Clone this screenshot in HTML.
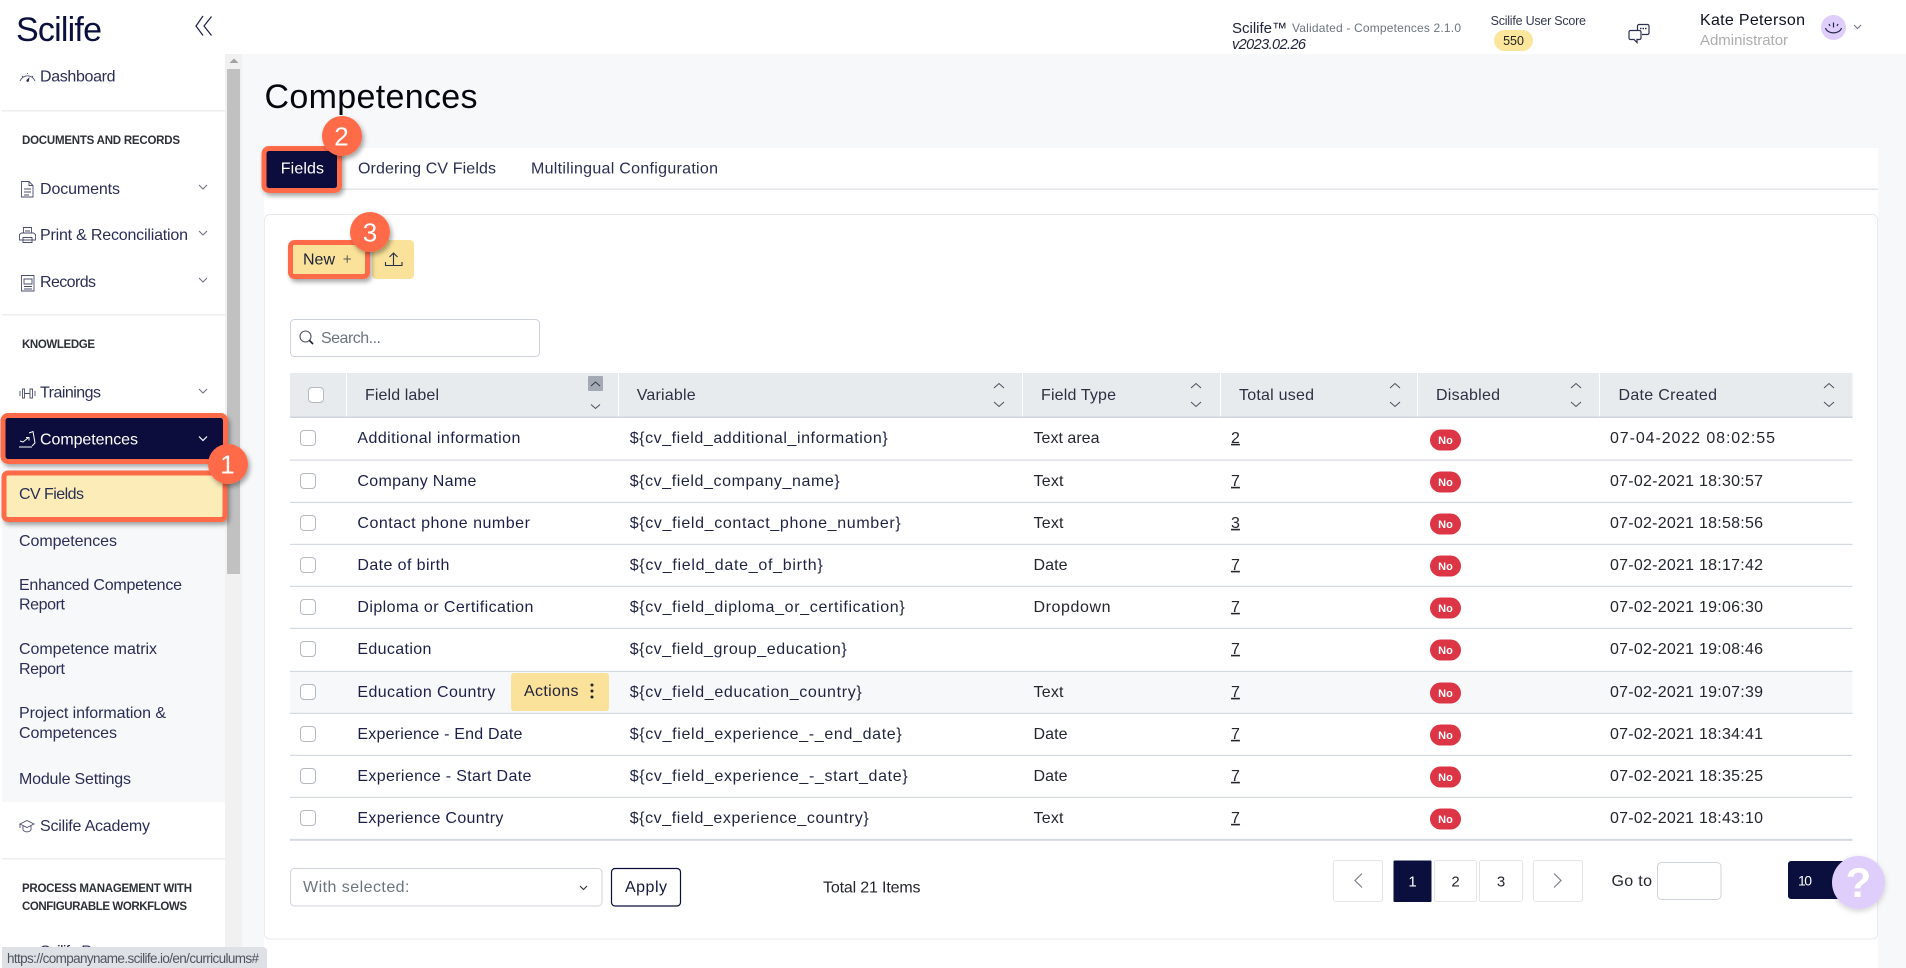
<!DOCTYPE html>
<html lang="en">
<head>
<meta charset="utf-8">
<title>Competences</title>
<style>
html,body{margin:0;padding:0;background:#fff;width:1906px;height:968px;overflow:hidden}
svg{display:block}
text{font-family:"Liberation Sans",sans-serif;fill:#20244c;font-size:16px;white-space:pre}
.s{fill:#2a2e55;transform:translateY(-.5px)}
.h{font-weight:bold;font-size:11.5px;fill:#2d3036;transform:translateY(-.5px)}
.t{font-size:16px;fill:#1c2048;transform:translateY(-.7px)}
.v{font-size:16px;fill:#1f2340;transform:translateY(-.7px)}
.d{font-size:16px;fill:#24262e;transform:translateY(-.7px)}
.u{font-size:16px;fill:#24262e;text-decoration:underline;transform:translateY(-.7px)}
.th{font-size:16px;fill:#2c3040;transform:translateY(-.5px)}
.no{font-size:11px;font-weight:bold;fill:#fff;text-anchor:middle}
.b{font-size:26px;fill:#fff;text-anchor:middle}
.sort{fill:none;stroke:#4b4f5c;stroke-width:1}
.ic{fill:none;stroke:#4a4e6e;stroke-width:.9}
.chev{fill:none;stroke:#6a6e80;stroke-width:1}
.cb{fill:#fff;stroke:#b4b9c1;stroke-width:1}
</style>
</head>
<body>
<svg width="1906" height="968" viewBox="0 0 1906 968" xmlns="http://www.w3.org/2000/svg">
<defs>
<filter id="sh" x="-30%" y="-30%" width="170%" height="170%"><feDropShadow dx="2" dy="3" stdDeviation="2.5" flood-color="#000" flood-opacity=".35"/></filter>
<filter id="sh2" x="-30%" y="-30%" width="170%" height="170%"><feDropShadow dx="0" dy="2" stdDeviation="3" flood-color="#000" flood-opacity=".18"/></filter>
</defs>

<!-- base -->
<rect width="1906" height="968" fill="#fff"/>
<rect x="242" y="54" width="1664" height="914" fill="#f7f8fa"/>
<rect x="264" y="148" width="1614" height="820" fill="#fff"/>

<!-- sidebar -->
<rect x="2" y="470" width="223" height="332" fill="#f7f8fa"/>
<rect x="225" y="54" width="17" height="914" fill="#f1f1f1"/>
<rect x="227" y="69" width="13" height="505" fill="#c1c1c1"/>
<path d="M229.500 63h9l-4.500-4.500z" fill="#a3a3a3"/>

<text x="16" y="41" style="font-size:34px;fill:#0a0f3e" textLength="86">Scilife</text>
<path d="M203 16l-7 10 7 9.500M211.500 16.500l-7.500 9.500 7.500 9.500" fill="none" stroke="#1a1e48" stroke-width="1.200"/>

<rect x="2" y="110" width="223" height="1.500" fill="#eceef0"/>
<rect x="2" y="314" width="223" height="1.500" fill="#eceef0"/>
<rect x="2" y="858" width="223" height="1.500" fill="#eceef0"/>

<path class="ic" d="M20 81a8 8 0 0 1 15 0M27.500 73v1M22 76l1 1M33 76l-1 1"/>
<path d="M27 79.500l2.500-2.500-.5 3.500a1.300 1.300 0 1 1-2-1z" fill="#2a2e55"/>
<text class="s" x="40" y="82" textLength="75.500">Dashboard</text>

<text class="h" x="22" y="144.500" textLength="158">DOCUMENTS AND RECORDS</text>

<path class="ic" d="M21.500 181.500h7.500l4 4v11.500h-11.500zM29 181.500v4h4M24 189h7M24 192h7M24 195h5"/>
<text class="s" x="40" y="194.700" textLength="80">Documents</text>
<path class="chev" d="M199 185l4 4 4-4"/>

<path class="ic" d="M23.500 233v-5.500h8v5.500M19.500 240v-5.500l2-1.500h12l2 1.500v5.500zM23 237.500h9v5h-9zM25 231h5"/>
<text class="s" x="40" y="240.700" textLength="148">Print &amp; Reconciliation</text>
<path class="chev" d="M199 231l4 4 4-4"/>

<path class="ic" d="M21.500 275.500h12.500v15.500h-12.500zM24 279h8v5h-8zM24 286.500h8M24 289h8"/>
<text class="s" x="40" y="287.300" textLength="56">Records</text>
<path class="chev" d="M199 278l4 4 4-4"/>

<text class="h" x="22" y="348.300" textLength="73">KNOWLEDGE</text>

<path class="ic" d="M20 391v5M22.500 389h2v9h-2zM24.500 393.500h5.500M30 389h2.500v9h-2.500zM35 391v5"/>
<text class="s" x="40" y="398" textLength="61">Trainings</text>
<path class="chev" d="M199 389l4 4 4-4"/>

<!-- Competences active -->
<rect x="3" y="415.500" width="222.500" height="46" rx="5" fill="#0a0f3e" stroke="#ff6b4a" stroke-width="5" filter="url(#sh)"/>
<path d="M19 447h13M20 441l3 1 5-4M26 437.500h3v3M29 433l4-1.500 2 11.500-3 3" fill="none" stroke="#fff" stroke-width="1"/>
<text x="40" y="444.500" style="fill:#fff;font-size:16px;-webkit-text-stroke:.25px #fff" textLength="98">Competences</text>
<path d="M199 436.500l4 4 4-4" fill="none" stroke="#fff" stroke-width="1.200"/>

<!-- CV Fields -->
<rect x="4" y="473" width="221" height="46.500" rx="4" fill="#fbecb8" stroke="#ff6b4a" stroke-width="5" filter="url(#sh)"/>
<text class="s" x="19" y="499.700" textLength="65">CV Fields</text>
<text class="s" x="19" y="546.700" textLength="98">Competences</text>
<text class="s" x="19" y="590.700" textLength="163">Enhanced Competence</text>
<text class="s" x="19" y="610" textLength="46">Report</text>
<text class="s" x="19" y="654.700" textLength="138">Competence matrix</text>
<text class="s" x="19" y="674.700" textLength="46">Report</text>
<text class="s" x="19" y="718.300" textLength="147">Project information &amp;</text>
<text class="s" x="19" y="738.300" textLength="98">Competences</text>
<text class="s" x="19" y="784.300" textLength="112">Module Settings</text>

<path class="ic" d="M20 824l7-3.500 7 3.500-7 3.500zM23 826v4c2 2.500 6 2.500 8 0v-4M20 824v4"/>
<text class="s" x="40" y="831.300" textLength="110">Scilife Academy</text>

<text class="h" x="22" y="892.700" textLength="170">PROCESS MANAGEMENT WITH</text>
<text class="h" x="22" y="910.700" textLength="165">CONFIGURABLE WORKFLOWS</text>
<text class="s" x="40" y="957" textLength="110">Scilife Processes</text>

<!-- header -->
<text x="1232" y="33" style="font-size:15px;fill:#20233a" textLength="55">Scilife™</text>
<text x="1292" y="32" style="font-size:12px;fill:#6c757d" textLength="169">Validated - Competences 2.1.0</text>
<text x="1232" y="49" style="font-size:14.500px;font-style:italic;fill:#20233a" textLength="74">v2023.02.26</text>
<text x="1490.600" y="25" style="font-size:12.500px;fill:#343a50" textLength="95.400">Scilife User Score</text>
<rect x="1494" y="30" width="39" height="21" rx="10.500" fill="#fbe69c"/>
<text x="1513.500" y="45" style="font-size:12.500px;fill:#222;text-anchor:middle">550</text>

<path d="M1637.500 30v-4a1.500 1.500 0 0 1 1.500-1.500h8.500a1.500 1.500 0 0 1 1.500 1.500v7a1.500 1.500 0 0 1-1.500 1.500h-5.500" fill="none" stroke="#2c3050" stroke-width="1.200"/>
<path d="M1630.500 30.500h9a1.500 1.500 0 0 1 1.500 1.500v6a1.500 1.500 0 0 1-1.500 1.500h-2.500v3l-3-3h-3.500a1.500 1.500 0 0 1-1.500-1.500v-6a1.500 1.500 0 0 1 1.500-1.500z" fill="#fff" stroke="#2c3050" stroke-width="1.200"/>
<path d="M1640 28.500h1.500M1642.500 28.500h1.500M1645 28.500h1.500" stroke="#2c3050" stroke-width="1.500"/>

<text x="1700" y="25" style="font-size:16px;fill:#0e1024" textLength="105">Kate Peterson</text>
<text x="1700" y="45" style="font-size:15px;fill:#adadad" textLength="88">Administrator</text>
<circle cx="1833.500" cy="27.500" r="12.500" fill="#dfcdfb"/>
<path d="M1825.500 28c2 6.500 14 6.500 16 0M1829 24l1 2M1838 24l-1 2M1833.500 22.500v5" fill="none" stroke="#23264d" stroke-width="1.200"/>
<path class="chev" d="M1854 25l3.500 3.500 3.500-3.500"/>

<!-- title -->
<text x="264.500" y="108" style="font-size:34px;fill:#05060f;-webkit-text-stroke:.75px #05060f" textLength="213">Competences</text>

<!-- tabs -->
<rect x="264" y="188.500" width="1614" height="1.500" fill="#e3e5e9"/>
<text class="s" x="358" y="174" textLength="138">Ordering CV Fields</text>
<text class="s" x="531" y="174" textLength="187">Multilingual Configuration</text>

<!-- card -->
<rect x="264.500" y="214.500" width="1613" height="724.500" rx="5" fill="#fff" stroke="#e8eaed" stroke-width="1"/>

<!-- Fields -->
<rect x="264" y="148.500" width="75.500" height="42" rx="5" fill="#0a0f3e" stroke="#ff6b4a" stroke-width="5" filter="url(#sh)"/>
<text x="280.800" y="173.500" style="fill:#fff;font-size:16px;-webkit-text-stroke:.2px #fff" textLength="43.200">Fields</text>

<!-- Upload -->
<rect x="372" y="240" width="42" height="39" rx="4" fill="#fae29a"/>
<path d="M393.500 253v12M389.500 257l4-4 4 4M385.500 262v3.500h16.500v-3.500" fill="none" stroke="#2c2f48" stroke-width="1.100"/>

<!-- New -->
<rect x="290.500" y="242.500" width="77" height="34" rx="4" fill="#fae29a" stroke="#ff6b4a" stroke-width="5" filter="url(#sh)"/>
<text class="s" x="303" y="265" textLength="32" style="fill:#20233a">New</text>
<path d="M343.500 259h7.500M347.200 255.200v7.500" stroke="#555" stroke-width="1"/>

<!-- Search -->
<rect x="290.500" y="319.500" width="249" height="37" rx="4" fill="#fff" stroke="#cdd2da" stroke-width="1"/>
<circle cx="305.500" cy="336.500" r="5.500" fill="none" stroke="#4e5260" stroke-width="1.100"/>
<path d="M309.500 340.500l3.500 3.500" stroke="#1c1f35" stroke-width="1.600"/>
<text x="321" y="343" style="font-size:16px;fill:#6c757d" textLength="60">Search...</text>

<!-- table header -->
<rect x="290" y="373" width="1562.500" height="44" fill="#e8ebee"/>
<rect x="290" y="416.500" width="1562.500" height="1.500" fill="#cfd5dd"/>
<g fill="#fff"><rect x="346" y="373" width="1" height="43.500"/><rect x="618" y="373" width="1" height="43.500"/><rect x="1022" y="373" width="1" height="43.500"/><rect x="1220" y="373" width="1" height="43.500"/><rect x="1417" y="373" width="1" height="43.500"/><rect x="1599" y="373" width="1" height="43.500"/></g>
<rect x="308.500" y="387.500" width="15" height="15" rx="3.500" class="cb"/>
<text class="th" x="365" y="400.700" textLength="74">Field label</text>
<text class="th" x="636.700" y="400.700" textLength="59">Variable</text>
<text class="th" x="1041" y="400.700" textLength="75">Field Type</text>
<text class="th" x="1239" y="400.700" textLength="75">Total used</text>
<text class="th" x="1436" y="400.700" textLength="64">Disabled</text>
<text class="th" x="1618.500" y="400.700" textLength="98.500">Date Created</text>

<rect x="588" y="376" width="15" height="15" rx="1" fill="#a4aab3"/>
<path d="M591 386l4.500-4 4.500 4" fill="none" stroke="#333845" stroke-width="1"/>
<path class="sort" d="M591 404.500l4.500 4 4.500-4"/>
<path class="sort" d="M994 388l5-4.500 5 4.500M994 402l5 4.500 5-4.500"/>
<path class="sort" d="M1191 388l5-4.500 5 4.500M1191 402l5 4.500 5-4.500"/>
<path class="sort" d="M1390 388l5-4.500 5 4.500M1390 402l5 4.500 5-4.500"/>
<path class="sort" d="M1571 388l5-4.500 5 4.500M1571 402l5 4.500 5-4.500"/>
<path class="sort" d="M1824 388l5-4.500 5 4.500M1824 402l5 4.500 5-4.500"/>

<!-- rows -->
<rect x="290" y="671.500" width="1562.500" height="41.500" fill="#f7f8fa"/>
<g fill="#d5d9e0">
<rect x="290" y="459.500" width="1562.500" height="1.200"/>
<rect x="290" y="501.800" width="1562.500" height="1.200"/>
<rect x="290" y="543.800" width="1562.500" height="1.200"/>
<rect x="290" y="585.800" width="1562.500" height="1.200"/>
<rect x="290" y="627.800" width="1562.500" height="1.200"/>
<rect x="290" y="670.800" width="1562.500" height="1.200"/>
<rect x="290" y="712.800" width="1562.500" height="1.200"/>
<rect x="290" y="754.800" width="1562.500" height="1.200"/>
<rect x="290" y="796.800" width="1562.500" height="1.200"/>
<rect x="290" y="838.800" width="1562.500" height="2"/>
</g>
<g>
<rect x="300.500" y="430.500" width="15" height="15" rx="3.500" class="cb"/>
<rect x="300.500" y="473.500" width="15" height="15" rx="3.500" class="cb"/>
<rect x="300.500" y="515.500" width="15" height="15" rx="3.500" class="cb"/>
<rect x="300.500" y="557.500" width="15" height="15" rx="3.500" class="cb"/>
<rect x="300.500" y="599.500" width="15" height="15" rx="3.500" class="cb"/>
<rect x="300.500" y="641.500" width="15" height="15" rx="3.500" class="cb"/>
<rect x="300.500" y="684.500" width="15" height="15" rx="3.500" class="cb"/>
<rect x="300.500" y="726.500" width="15" height="15" rx="3.500" class="cb"/>
<rect x="300.500" y="768.500" width="15" height="15" rx="3.500" class="cb"/>
<rect x="300.500" y="810.500" width="15" height="15" rx="3.500" class="cb"/>
</g>

<text class="t" x="357.400" y="443.500" textLength="163">Additional information</text>
<text class="t" x="357.400" y="486.500" textLength="119">Company Name</text>
<text class="t" x="357.400" y="528.500" textLength="172.500">Contact phone number</text>
<text class="t" x="357.400" y="570.500" textLength="92">Date of birth</text>
<text class="t" x="357.400" y="612.500" textLength="176">Diploma or Certification</text>
<text class="t" x="357.400" y="654.500" textLength="74">Education</text>
<text class="t" x="357.400" y="697.500" textLength="138">Education Country</text>
<text class="t" x="357.400" y="739.500" textLength="165">Experience - End Date</text>
<text class="t" x="357.400" y="781.500" textLength="174">Experience - Start Date</text>
<text class="t" x="357.400" y="823.500" textLength="146">Experience Country</text>

<text class="v" x="629.700" y="443.500" textLength="258">${cv_field_additional_information}</text>
<text class="v" x="629.700" y="486.500" textLength="210">${cv_field_company_name}</text>
<text class="v" x="629.700" y="528.500" textLength="271">${cv_field_contact_phone_number}</text>
<text class="v" x="629.700" y="570.500" textLength="193">${cv_field_date_of_birth}</text>
<text class="v" x="629.700" y="612.500" textLength="275">${cv_field_diploma_or_certification}</text>
<text class="v" x="629.700" y="654.500" textLength="217">${cv_field_group_education}</text>
<text class="v" x="629.700" y="697.500" textLength="232">${cv_field_education_country}</text>
<text class="v" x="629.700" y="739.500" textLength="272">${cv_field_experience_-_end_date}</text>
<text class="v" x="629.700" y="781.500" textLength="278">${cv_field_experience_-_start_date}</text>
<text class="v" x="629.700" y="823.500" textLength="239">${cv_field_experience_country}</text>

<text class="d" x="1033.500" y="443.500" textLength="66">Text area</text>
<text class="d" x="1033.500" y="486.500" textLength="30">Text</text>
<text class="d" x="1033.500" y="528.500" textLength="30">Text</text>
<text class="d" x="1033.500" y="570.500" textLength="34">Date</text>
<text class="d" x="1033.500" y="612.500" textLength="77">Dropdown</text>
<text class="d" x="1033.500" y="697.500" textLength="30">Text</text>
<text class="d" x="1033.500" y="739.500" textLength="34">Date</text>
<text class="d" x="1033.500" y="781.500" textLength="34">Date</text>
<text class="d" x="1033.500" y="823.500" textLength="30">Text</text>

<text class="u" x="1231" y="443.500">2</text>
<text class="u" x="1231" y="486.500">7</text>
<text class="u" x="1231" y="528.500">3</text>
<text class="u" x="1231" y="570.500">7</text>
<text class="u" x="1231" y="612.500">7</text>
<text class="u" x="1231" y="654.500">7</text>
<text class="u" x="1231" y="697.500">7</text>
<text class="u" x="1231" y="739.500">7</text>
<text class="u" x="1231" y="781.500">7</text>
<text class="u" x="1231" y="823.500">7</text>

<g fill="#dc3545">
<rect x="1430" y="429.500" width="31" height="21" rx="10.500"/>
<rect x="1430" y="471.500" width="31" height="21" rx="10.500"/>
<rect x="1430" y="513.500" width="31" height="21" rx="10.500"/>
<rect x="1430" y="555.500" width="31" height="21" rx="10.500"/>
<rect x="1430" y="597.500" width="31" height="21" rx="10.500"/>
<rect x="1430" y="639.500" width="31" height="21" rx="10.500"/>
<rect x="1430" y="682.500" width="31" height="21" rx="10.500"/>
<rect x="1430" y="724.500" width="31" height="21" rx="10.500"/>
<rect x="1430" y="766.500" width="31" height="21" rx="10.500"/>
<rect x="1430" y="808.500" width="31" height="21" rx="10.500"/>
</g>
<text class="no" x="1445.500" y="444">No</text>
<text class="no" x="1445.500" y="486">No</text>
<text class="no" x="1445.500" y="528">No</text>
<text class="no" x="1445.500" y="570">No</text>
<text class="no" x="1445.500" y="612">No</text>
<text class="no" x="1445.500" y="654">No</text>
<text class="no" x="1445.500" y="697">No</text>
<text class="no" x="1445.500" y="739">No</text>
<text class="no" x="1445.500" y="781">No</text>
<text class="no" x="1445.500" y="823">No</text>

<text class="d" x="1610" y="443.500" textLength="165">07-04-2022 08:02:55</text>
<text class="d" x="1610" y="486.500" textLength="153">07-02-2021 18:30:57</text>
<text class="d" x="1610" y="528.500" textLength="153">07-02-2021 18:58:56</text>
<text class="d" x="1610" y="570.500" textLength="153">07-02-2021 18:17:42</text>
<text class="d" x="1610" y="612.500" textLength="153">07-02-2021 19:06:30</text>
<text class="d" x="1610" y="654.500" textLength="153">07-02-2021 19:08:46</text>
<text class="d" x="1610" y="697.500" textLength="153">07-02-2021 19:07:39</text>
<text class="d" x="1610" y="739.500" textLength="153">07-02-2021 18:34:41</text>
<text class="d" x="1610" y="781.500" textLength="153">07-02-2021 18:35:25</text>
<text class="d" x="1610" y="823.500" textLength="153">07-02-2021 18:43:10</text>

<!-- Actions -->
<rect x="511" y="673" width="98" height="38" rx="3" fill="#fae29a"/>
<text x="524" y="696" style="font-size:16px;fill:#20233a" textLength="54.500">Actions</text>
<circle cx="592" cy="685" r="1.500" fill="#222"/><circle cx="592" cy="691" r="1.500" fill="#222"/><circle cx="592" cy="697" r="1.500" fill="#222"/>

<!-- footer -->
<rect x="290.500" y="868.500" width="311.500" height="37.500" rx="4" fill="#fff" stroke="#cfd3da" stroke-width="1"/>
<text x="303" y="892" style="font-size:16px;fill:#6c757d" textLength="106.500">With selected:</text>
<path d="M580 886l3.500 3.500 3.500-3.500" fill="none" stroke="#333" stroke-width="1.100"/>
<rect x="611.500" y="868.500" width="69" height="37.500" rx="3.500" fill="#fff" stroke="#0a0f3e" stroke-width="1.200"/>
<text x="625" y="892" style="font-size:16px;fill:#14183e" textLength="42">Apply</text>
<text class="d" x="823" y="893" textLength="97.500">Total 21 Items</text>

<g fill="#fff" stroke="#e3e5e9" stroke-width="1">
<rect x="1333.500" y="860.500" width="49" height="41" rx="2"/>
<rect x="1434.500" y="860.500" width="42" height="41" rx="2"/>
<rect x="1479.500" y="860.500" width="43" height="41" rx="2"/>
<rect x="1533.500" y="860.500" width="49" height="41" rx="2"/>
</g>
<rect x="1393.500" y="860.500" width="38" height="41.500" rx="1" fill="#0a0f3e"/>
<path d="M1362 873.500l-7 7 7 7" fill="none" stroke="#7b8088" stroke-width="1.200"/>
<path d="M1554 873.500l7 7-7 7" fill="none" stroke="#7b8088" stroke-width="1.200"/>
<text x="1412.500" y="886.500" style="font-size:15px;fill:#fff;text-anchor:middle">1</text>
<text x="1455.500" y="886.500" style="font-size:15px;fill:#24262e;text-anchor:middle">2</text>
<text x="1501" y="886.500" style="font-size:15px;fill:#24262e;text-anchor:middle">3</text>
<text class="d" x="1611.500" y="886.500" textLength="40.500">Go to</text>
<rect x="1657.500" y="862.500" width="63.500" height="37" rx="4" fill="#fff" stroke="#cfd3da" stroke-width="1"/>

<rect x="1788" y="861" width="78" height="38" rx="3" fill="#0a0f3e"/>
<text x="1798" y="885.500" style="font-size:14px;fill:#fff" textLength="14">10</text>
<ellipse cx="1858.500" cy="882.500" rx="26.500" ry="26.500" fill="#dfcdfb" filter="url(#sh2)"/>
<text x="1858.500" y="897" style="font-size:42px;font-weight:bold;fill:#fff;text-anchor:middle">?</text>

<!-- status bar -->
<path d="M2 968v-21h261a4 4 0 0 1 4 4v17z" fill="#dee1e6"/>
<text x="7" y="963" style="font-size:13.500px;fill:#50545e" textLength="252">https://companyname.scilife.io/en/curriculums#</text>

<!-- badges -->
<g filter="url(#sh)">
<circle cx="228" cy="464" r="20" fill="#ff6b4a"/>
<circle cx="342" cy="136" r="20" fill="#ff6b4a"/>
<circle cx="370" cy="232" r="20" fill="#ff6b4a"/>
</g>
<text class="b" x="227.500" y="473.500">1</text>
<text class="b" x="341.500" y="145.500">2</text>
<text class="b" x="370" y="241.500">3</text>
</svg>
</body>
</html>
